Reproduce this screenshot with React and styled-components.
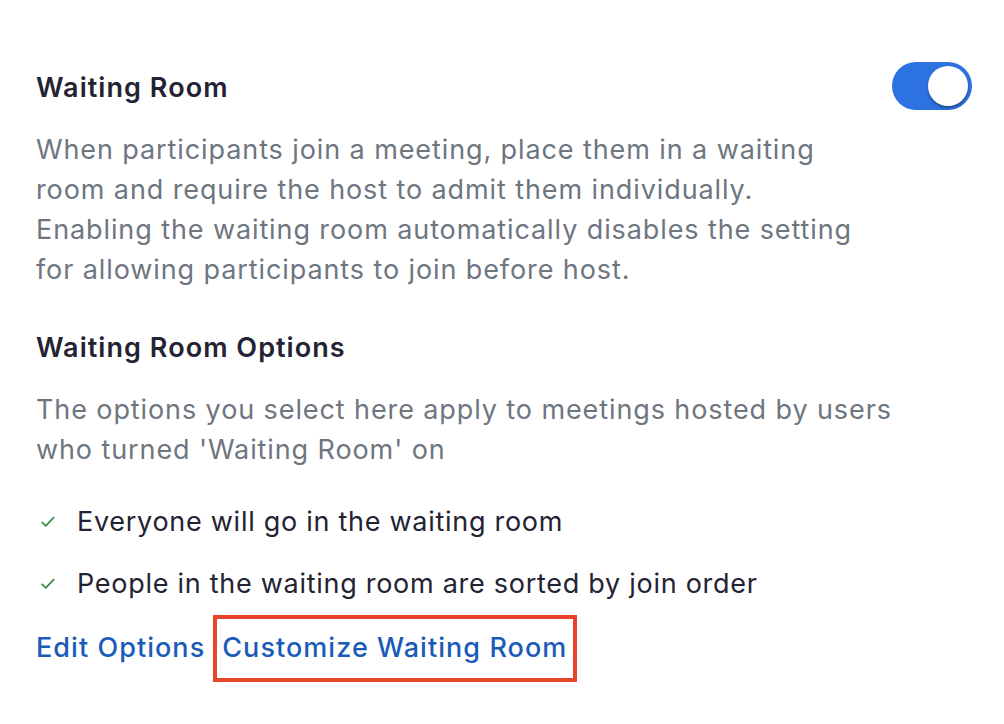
import React from "react";
import styled, { createGlobalStyle } from "styled-components";

const Global = createGlobalStyle`
  html, body { margin: 0; padding: 0; background: #ffffff; }
  body { font-family: Inter, "Noto Sans", sans-serif; -webkit-font-smoothing: antialiased; }
`;

const Page = styled.div`
  width: 1004px;
  height: 724px;
  box-sizing: border-box;
  padding: 62px 32px 0 36px;
  background: #fff;
`;

const Header = styled.div`
  display: flex;
  justify-content: space-between;
  align-items: flex-start;
`;

const HeaderText = styled.div`
  width: 834px;
  padding-top: 6px;
`;

const Title = styled.h2`
  margin: 0;
  font-size: 27px;
  line-height: 40px;
  font-weight: 600;
  color: #232333;
  letter-spacing: 1.05px;
`;

const Desc = styled.p`
  margin: ${(p) => p.$mt || 0}px 0 0;
  max-width: ${(p) => p.$maxw || "none"};
  font-size: 27px;
  line-height: 40px;
  font-weight: 400;
  color: #6e7680;
  letter-spacing: 0.9px;
`;

const Toggle = styled.div`
  flex: none;
  width: 80px;
  height: 48px;
  border-radius: 24px;
  background: #2d72e1;
  display: flex;
  align-items: center;
  justify-content: flex-end;
  padding: 0 4px;
  box-sizing: border-box;
`;

const Knob = styled.div`
  width: 40px;
  height: 40px;
  border-radius: 50%;
  background: #fff;
  box-shadow: 0 2px 3px rgba(0, 0, 0, 0.35);
`;

const Section = styled.div`
  margin-top: 38px;
`;

const List = styled.ul`
  list-style: none;
  margin: 32px 0 0;
  padding: 0;
  display: flex;
  flex-direction: column;
  gap: 22px;
`;

const Item = styled.li`
  display: flex;
  align-items: center;
  font-size: 27px;
  line-height: 40px;
  color: #232333;
  letter-spacing: 0.72px;
`;

const CheckWrap = styled.span`
  flex: none;
  width: 41px;
  display: flex;
  align-items: center;
  padding-left: 5px;
  box-sizing: border-box;
`;

const Links = styled.div`
  margin-top: 24px;
  display: flex;
  gap: 17px;
  align-items: center;
`;

const Link = styled.a`
  position: relative;
  font-size: 27px;
  line-height: 40px;
  font-weight: 450;
  color: #1a5bb8;
  text-decoration: none;
  letter-spacing: 1.05px;
  cursor: pointer;
  ${(p) =>
    p.$highlight &&
    `
    &::after {
      content: "";
      position: absolute;
      top: -13px;
      bottom: -14px;
      left: -9px;
      right: -10px;
      border: 4px solid #e8442c;
      pointer-events: none;
    }
  `}
`;

const Check = () => (
  <svg width="14" height="12" viewBox="0 0 14 12" fill="none">
    <path d="M1.2 6.4 L4.8 9.8 L12.6 1.6" stroke="#3f8c4b" strokeWidth="1.8" strokeLinecap="round" strokeLinejoin="round" />
  </svg>
);

export default function App() {
  return (
    <>
      <Global />
      <Page>
        <Header>
          <HeaderText>
            <Title>Waiting Room</Title>
            <Desc $mt={22}>
              When participants join a meeting, place them in a waiting room and require the host to admit them
              individually. Enabling the waiting room automatically disables the setting for allowing participants
              to join before host.
            </Desc>
          </HeaderText>
          <Toggle>
            <Knob />
          </Toggle>
        </Header>
        <Section>
          <Title>Waiting Room Options</Title>
          <Desc $mt={22} $maxw="880px">
            The options you select here apply to meetings hosted by users who turned 'Waiting Room' on
          </Desc>
          <List>
            <Item>
              <CheckWrap>
                <Check />
              </CheckWrap>
              Everyone will go in the waiting room
            </Item>
            <Item>
              <CheckWrap>
                <Check />
              </CheckWrap>
              People in the waiting room are sorted by join order
            </Item>
          </List>
          <Links>
            <Link>Edit Options</Link>
            <Link $highlight>Customize Waiting Room</Link>
          </Links>
        </Section>
      </Page>
    </>
  );
}
